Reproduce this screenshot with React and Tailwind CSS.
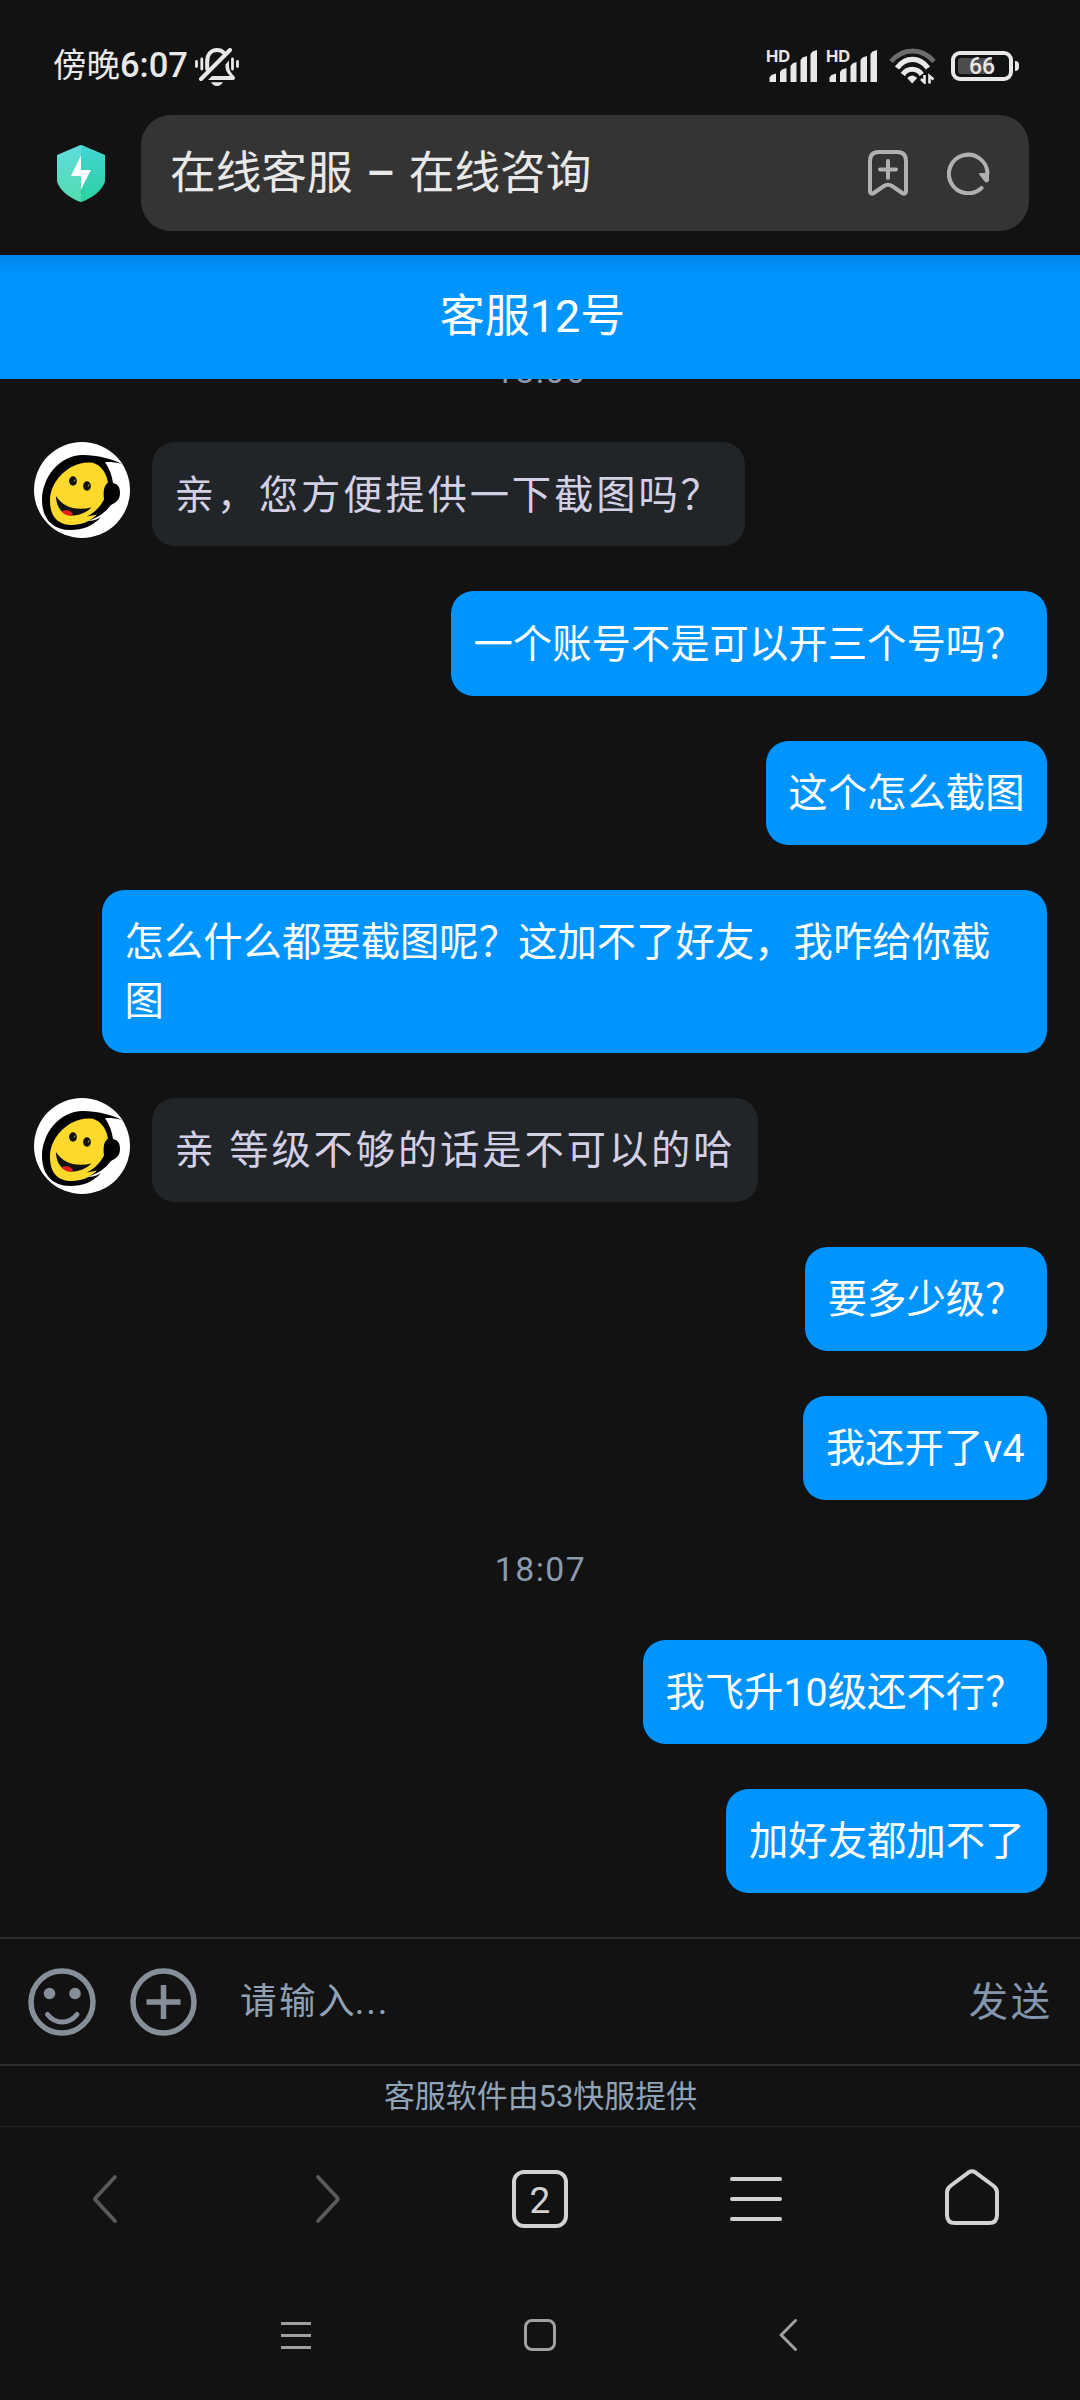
function MutedBell() {
  return (
    <svg className="h-[38px] w-11" viewBox="0 0 44 38" fill="none" stroke="#e8e8e8" strokeLinecap="round">
      <path d="M1.500 13.500v5M6.800 11v10M37.500 11v10M42.500 13.500v5" strokeWidth="2.800" />
      <path d="M12.200 21V13.500C12.200 6.500 16 2 22 2c2.500 0 5 .8 7 2.800" strokeWidth="4" />
      <path d="M30.500 16.500L34 12.500v5.500c0 4 2 7 5.500 10.500q1.500 3.500-2 3.500H13l4-4h18c-3-3-4.500-6-4.500-9z" fill="#e8e8e8" stroke="none" />
      <path d="M6 31L35 2" strokeWidth="4" />
      <path d="M16 34.200h12c-1.300 2.400-3.500 3.800-6 3.800s-4.700-1.400-6-3.800z" fill="#e8e8e8" stroke="none" />
    </svg>
  );
}

function Signal() {
  return (
    <div className="relative h-[34px] w-[50px]">
      <span className="absolute -left-px top-px text-[16.5px] leading-[12px] font-bold font-['Inter',sans-serif]">HD</span>
      <svg className="h-full w-full" viewBox="0 0 50 34" fill="#e8e8e8">
        <path d="M2.500 28.500l2-2.500 4.500-1.500V33H2.500zM13 23l2-2.500 4.500-1.500v14H13zM23.500 17l2-2.500 4-1.500v20h-6zM33.500 11l2-2.500L40 7v26h-6.500zM43.500 5l2-2.500L50 1v32h-6.500z" />
      </svg>
    </div>
  );
}

function Wifi() {
  return (
    <svg className="h-9 w-[47px]" viewBox="0 0 47 36" fill="none">
      <path d="M2 13.500C14-.5 33-.5 45 13.500" stroke="#6c6c6c" strokeWidth="4.800" />
      <path d="M8 20c8.500-11.500 22.500-11.500 31 0" stroke="#e8e8e8" strokeWidth="5.200" />
      <path d="M13.800 26.500c5-7 14-7 19 0" stroke="#e8e8e8" strokeWidth="5.200" />
      <path d="M18.200 30q5-5 10 0L23.200 35.500z" fill="#e8e8e8" />
      <path d="M35.500 27v7.500l-3.500-3.500M40.500 35.500v-7.500l4 3.500" stroke="#e8e8e8" strokeWidth="2.600" />
    </svg>
  );
}

function Battery() {
  return (
    <div className="flex items-center gap-0.5">
      <div className="flex h-[30px] w-[62px] rounded-[9px] border-4 border-[#e8e8e8] p-[3px]">
        <div className="relative h-full w-full">
          <div className="h-full w-[34px] rounded-l-[3px] bg-[#4c4c4c]" />
          <span className="absolute inset-0 flex items-center justify-center pt-px text-[23px] leading-none font-medium">66</span>
        </div>
      </div>
      <div className="h-2.5 w-1 rounded-r-full bg-[#e8e8e8]" />
    </div>
  );
}

function StatusBar() {
  return (
    <div className="flex h-[115px] items-center pt-[17px] pr-[61px] pl-[53px] text-[#e8e8e8]">
      <span className="w-[142px] text-[34.5px] font-medium whitespace-nowrap">
        <span className="text-[33.5px] font-normal">傍晚</span>6:07
      </span>
      <div className="flex pt-0.5"><MutedBell /></div>
      <div className="ml-auto flex items-center">
        <Signal />
        <div className="ml-2.5"><Signal /></div>
        <div className="ml-3 flex"><Wifi /></div>
        <div className="ml-[15px]"><Battery /></div>
      </div>
    </div>
  );
}

function AddressBar() {
  return (
    <div className="flex h-[116px] items-center pr-[51px] pl-[57px]">
      <svg className="h-[57px] w-12" viewBox="0 0 48 57">
        <defs>
          <linearGradient id="shieldLeft" x1="0" y1="0" x2="0" y2="1">
            <stop offset="0" stopColor="#60dcdc" />
            <stop offset="1" stopColor="#52dcae" />
          </linearGradient>
          <linearGradient id="shieldRight" x1="0" y1="0" x2="0" y2="1">
            <stop offset="0" stopColor="#42d5d5" />
            <stop offset="1" stopColor="#2bd2a0" />
          </linearGradient>
        </defs>
        <path d="M24 0Q22 0 20 1.500L0 10v25c0 7 11 18 24 22z" fill="url(#shieldLeft)" />
        <path d="M24 0q2 0 4 1.500L48 10v25c0 7-11 18-24 22z" fill="url(#shieldRight)" />
        <path d="M24 10.500L14 31h10v13.500L34 25H24z" fill="#fff" />
      </svg>
      <div className="ml-9 flex h-full flex-1 items-center rounded-[30px] bg-[#343434] pr-[39px] pl-[29px]">
        <span className="pt-0.5 text-[45.7px] leading-none whitespace-nowrap text-[#e8e8e8]">
          在线客服<span className="inline-block w-14 text-center font-medium">–</span>在线咨询
        </span>
        <svg className="ml-auto h-[46px] w-10" viewBox="0 0 40 46" fill="none" stroke="#b0b0b0" strokeWidth="4" strokeLinecap="round" strokeLinejoin="round">
          <path d="M2 41V11q0-9 9-9h18q9 0 9 9v30q0 3-3 2.500L24 36q-4-2.500-8 0L5 43.500Q2 44 2 41zM20 11v17M12 19.500h16" />
        </svg>
        <svg className="ml-[39px] h-[43px] w-[43px]" viewBox="0 0 43 43" fill="none" stroke="#b0b0b0" strokeWidth="4" strokeLinecap="round">
          <path d="M34.500 36A19.300 19.300 0 1 1 40.500 21.500" />
          <path d="M33 22h8v6.500q-1.500 2-3 0z" fill="#b0b0b0" strokeWidth="2" strokeLinejoin="round" />
        </svg>
      </div>
    </div>
  );
}

function Avatar() {
  return (
    <svg className="h-24 w-24 shrink-0 rounded-full bg-white" viewBox="0 0 96 96">
      <path d="M88 22C80 20 76 20 71 20c4 6 7 13 8 21 5 1 7 4 7 10s-3 9-9 12c-6 8-14 13-24 16 5 0 9-1 14-4-8 9-18 13-31 13C19 88 8 77 8 58 8 36 25 13 49 13c14 0 30 4 39 9z" fill="#000" />
      <path d="M54 20.500c9-1 18 7 20 20-4 3-5 8-4 17-5 9-10 13-17 17l10-2c-7 7-16 10.500-25 10.500-14 0-22-8-22-24 0-20 18-38 38-38.500z" fill="#fcd92b" />
      <path d="M22 54c7 11 19 15 35.500 11.500C52 71 44 74 36 73.500 27 72 22 64 22 54z" fill="#111" />
      <path d="M27.500 69.500c4-2.500 9-1.500 11.500 2.500l-2 1.700c-4 0-7-1.200-9.500-4.200z" fill="#e8201c" />
      <ellipse cx="39" cy="39" rx="3.900" ry="4.700" fill="#111" />
      <ellipse cx="53" cy="44" rx="3.900" ry="4.700" fill="#111" />
      <path d="M41 37.500l-.8 2M55 42.500l-.8 2" stroke="#8a7a20" strokeWidth="1.500" />
    </svg>
  );
}

function AgentMessage({ children }) {
  return (
    <div className="flex items-start gap-[22px]">
      <Avatar />
      <div className="rounded-[22.5px] bg-[#212527] px-[22.5px] pt-[23.5px] pb-[21.5px] text-[39.375px] leading-[59.06px] tracking-[2.8125px] text-[#d3d0e6]">
        {children}
      </div>
    </div>
  );
}

function UserMessage({ children }) {
  return (
    <div className="max-w-[945px] self-end rounded-[22.5px] bg-[#0094ff] px-[22.5px] pt-[23.5px] pb-[21.5px] text-[39.375px] leading-[59.06px] text-white">
      {children}
    </div>
  );
}

function Timestamp({ children }) {
  return (
    <div className="self-center text-[33.75px] leading-[50px] tracking-[1.5px] text-[#8a9bb0]">{children}</div>
  );
}

function ChatHeader() {
  return (
    <div className="z-10 flex h-[123.75px] shrink-0 items-center justify-center bg-[#0094ff] bg-linear-to-b from-[#0086e8] to-[#0094ff] to-[20px] pr-[15px] text-[45px] leading-none text-white">
      客服12号
    </div>
  );
}

function Conversation() {
  return (
    <div className="-mt-[30px] flex h-[1588.25px] flex-col justify-end gap-[45px] overflow-hidden pr-[33px] pb-[44px] pl-[34px]">
      <Timestamp>18:06</Timestamp>
      <AgentMessage>亲，您方便提供一下截图吗？</AgentMessage>
      <UserMessage>一个账号不是可以开三个号吗？</UserMessage>
      <UserMessage>这个怎么截图</UserMessage>
      <UserMessage>怎么什么都要截图呢？这加不了好友，我咋给你截图</UserMessage>
      <AgentMessage>亲 等级不够的话是不可以的哈</AgentMessage>
      <UserMessage>要多少级？</UserMessage>
      <UserMessage>我还开了v4</UserMessage>
      <Timestamp>18:07</Timestamp>
      <UserMessage>我飞升10级还不行？</UserMessage>
      <UserMessage>加好友都加不了</UserMessage>
    </div>
  );
}

function Composer() {
  return (
    <div className="flex h-[129px] items-center border-y-2 border-[#2e2e2e] pr-[27px] pl-7">
      <svg className="h-[68px] w-[68px]" viewBox="0 0 68 68" fill="none" stroke="#868e99" strokeWidth="5.500" strokeLinecap="round">
        <circle cx="34" cy="34" r="31" />
        <circle cx="21.500" cy="25.500" r="5.800" fill="#868e99" stroke="none" />
        <circle cx="47" cy="25.500" r="5.800" fill="#868e99" stroke="none" />
        <path d="M19.500 46.500c8 10 21.500 10 29.500 0" strokeWidth="5" />
      </svg>
      <svg className="ml-[34px] h-[68px] w-[67px]" viewBox="0 0 67 68" fill="none" stroke="#868e99" strokeWidth="5.500">
        <ellipse cx="33.500" cy="34" rx="30.500" ry="31" />
        <path d="M33.500 17v34M16.500 34h34" />
      </svg>
      <span className="ml-[43px] pt-px text-[36.56px] leading-none tracking-[2.4px] text-[#8fa2b5]">
        请输入<span className="-ml-0.5 tracking-[1.8px]">...</span>
      </span>
      <span className="ml-auto pt-0.5 text-[39.375px] leading-none tracking-[2.8125px] text-[#8496ad]">发送</span>
    </div>
  );
}

function Toolbar() {
  return (
    <div className="grid h-[144px] grid-cols-5 place-items-center border-t border-[#222222]">
      <svg className="mr-1.5 h-[50px] w-8" viewBox="0 0 32 50" fill="none" stroke="#5a5a5a" strokeWidth="3.800" strokeLinecap="round" strokeLinejoin="round">
        <path d="M26 3L7 23.500q-1.500 1.500 0 3L26 47" />
      </svg>
      <svg className="ml-2 h-[50px] w-8" viewBox="0 0 32 50" fill="none" stroke="#5a5a5a" strokeWidth="3.800" strokeLinecap="round" strokeLinejoin="round">
        <path d="M6 3l19 20.500q1.500 1.500 0 3L6 47" />
      </svg>
      <div className="flex h-[58px] w-14 items-center justify-center rounded-[12px] border-4 border-[#d2d2d2] pt-[3px] text-[37px] leading-none text-[#d2d2d2]">2</div>
      <div className="flex w-[52px] flex-col gap-4">
        <div className="h-1 rounded-sm bg-[#d2d2d2]" />
        <div className="h-1 rounded-sm bg-[#d2d2d2]" />
        <div className="h-1 rounded-sm bg-[#d2d2d2]" />
      </div>
      <svg className="mb-1 h-14 w-[54px]" viewBox="0 0 54 56" fill="none" stroke="#d2d2d2" strokeWidth="4" strokeLinejoin="round">
        <path d="M24 3.200q3-2 6 0L48 16.500q4 3 4 6.500v23q0 8-8 8H10q-8 0-8-8V23q0-3.500 4-6.500z" />
      </svg>
    </div>
  );
}

function SystemNav() {
  return (
    <div className="flex flex-1 items-center pl-[281px]">
      <div className="flex w-[30px] flex-col gap-[9px]">
        <div className="h-[3px] bg-[#a0a0a0]" />
        <div className="h-[3px] bg-[#a0a0a0]" />
        <div className="h-[3px] bg-[#a0a0a0]" />
      </div>
      <div className="ml-[213px] h-8 w-8 rounded-[8px] border-3 border-[#a0a0a0]" />
      <svg className="ml-[223px] h-8 w-[18px]" viewBox="0 0 18 32" fill="none" stroke="#a0a0a0" strokeWidth="3" strokeLinecap="round">
        <path d="M16.500 1.500L2.200 16 16.500 30.500" />
      </svg>
    </div>
  );
}

export default function App() {
  return (
    <div lang="zh-CN" className="flex h-[2400px] w-[1080px] flex-col overflow-hidden bg-[#121212] font-['Roboto','Noto_Sans_CJK_SC',sans-serif]">
      <StatusBar />
      <AddressBar />
      <div className="mt-6 flex flex-col">
        <ChatHeader />
        <Conversation />
      </div>
      <Composer />
      <div className="flex h-[60px] items-center justify-center pt-0.5 pl-px text-[30.94px] leading-none text-[#8fa4b9]">客服软件由53快服提供</div>
      <Toolbar />
      <SystemNav />
    </div>
  );
}
